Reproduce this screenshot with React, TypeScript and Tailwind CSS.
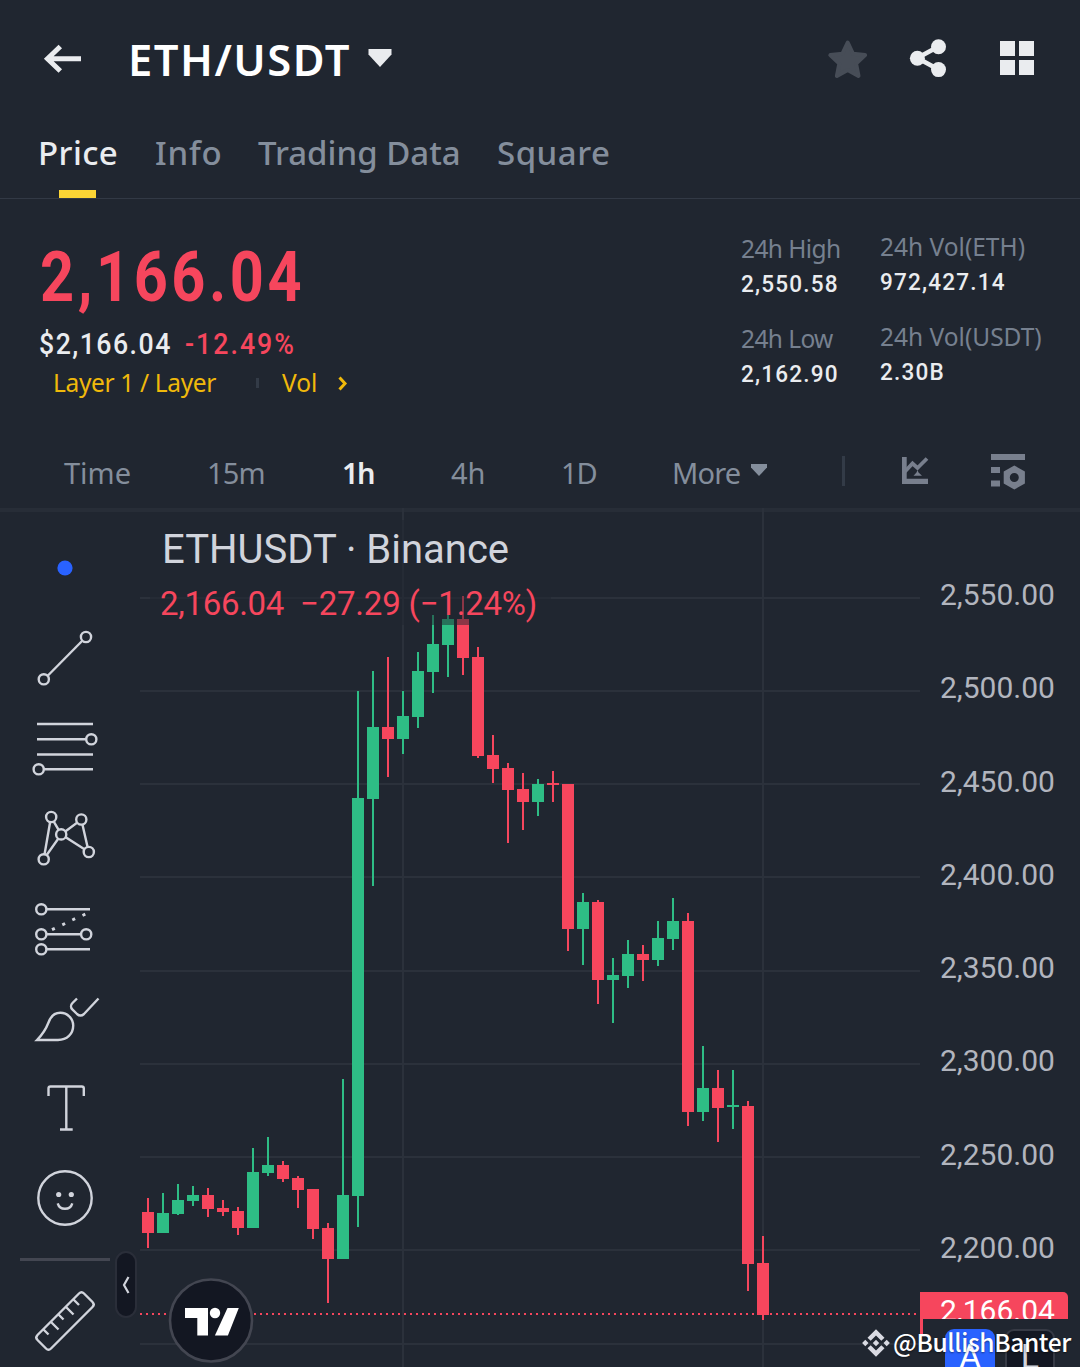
import React from "react";

const UP = "#2ebd85";
const DOWN = "#f6465d";

type Candle = [dir: 1 | 0, high: number, top: number, bottom: number, low: number];

// Candles from left to right: direction, wick top, body top, body bottom, wick bottom.
const candles: Candle[] = [
  [0, 1198, 1212, 1233, 1248],
  [1, 1193, 1213, 1233, 1233],
  [1, 1184, 1200, 1214, 1215],
  [1, 1186, 1195, 1201, 1206],
  [0, 1188, 1195, 1209, 1217],
  [0, 1200, 1208, 1212, 1216],
  [0, 1207, 1211, 1228, 1235],
  [1, 1148, 1172, 1228, 1228],
  [1, 1137, 1165, 1173, 1176],
  [0, 1161, 1165, 1179, 1182],
  [0, 1176, 1178, 1190, 1208],
  [0, 1189, 1189, 1229, 1239],
  [0, 1223, 1228, 1259, 1303],
  [1, 1079, 1195, 1259, 1259],
  [1, 691, 798, 1196, 1227],
  [1, 671, 727, 799, 886],
  [0, 657, 727, 739, 777],
  [1, 691, 716, 739, 754],
  [1, 652, 671, 717, 728],
  [1, 615, 644, 672, 693],
  [1, 612, 619, 645, 677],
  [0, 596, 619, 658, 675],
  [0, 647, 657, 756, 758],
  [0, 735, 755, 769, 783],
  [0, 763, 768, 790, 843],
  [0, 773, 789, 802, 830],
  [1, 779, 784, 802, 816],
  [0, 771, 783, 785, 802],
  [0, 784, 784, 929, 951],
  [1, 893, 902, 929, 965],
  [0, 900, 902, 980, 1004],
  [1, 958, 975, 980, 1023],
  [1, 940, 954, 976, 988],
  [0, 945, 954, 960, 981],
  [1, 921, 938, 960, 966],
  [1, 898, 921, 939, 950],
  [0, 913, 921, 1112, 1126],
  [1, 1046, 1088, 1112, 1121],
  [0, 1070, 1088, 1108, 1142],
  [1, 1070, 1105, 1107, 1129],
  [0, 1101, 1106, 1264, 1291],
  [0, 1236, 1263, 1315, 1320],
];

const gridRows = [597, 690, 783, 876, 970, 1063, 1156, 1249, 1343];
const priceLabels = ["2,550.00", "2,500.00", "2,450.00", "2,400.00", "2,350.00", "2,300.00", "2,250.00", "2,200.00"];

function Header() {
  return (
    <header className="flex h-[117px] items-center">
      <svg className="h-[117px] w-[128px]" viewBox="0 0 128 117" fill="none" stroke="#eaecef" strokeWidth="5">
        <path d="M47 58.7H81M60.3 46.5 47.5 58.7l12.8 12.3" />
      </svg>
      <h1 className="w-[240px] whitespace-nowrap font-['Noto_Sans'] text-[43.5px] leading-[60px] font-semibold tracking-[1.5px] text-white">ETH/USDT</h1>
      <svg className="h-[117px] w-[30px]" viewBox="368 0 30 117" fill="#eaecef">
        <path d="M368.5 49h23v5.5L380 67l-11.5-12.5z" />
      </svg>
      <div className="ml-auto flex">
        <svg className="h-[117px] w-[70px]" viewBox="820 0 70 117" fill="#474d57" stroke="#474d57" strokeWidth="4" strokeLinejoin="round">
          <path d="M847.7 42.5l5.2 11.2 12.2 1.4-9 8.5 2.4 12.4-10.8-6.1-10.8 6.1 2.4-12.4-9-8.5 12.2-1.4z" />
        </svg>
        <svg className="h-[117px] w-[90px]" viewBox="890 0 90 117" fill="#eaecef">
          <path d="M938.5 46.5 917.4 58l21.1 11.5" fill="none" stroke="#eaecef" strokeWidth="4.6" />
          <circle cx="917.4" cy="58.2" r="7.5" />
          <circle cx="938.5" cy="46.7" r="7.5" />
          <circle cx="938.5" cy="69.6" r="7.5" />
        </svg>
        <svg className="h-[117px] w-[100px]" viewBox="980 0 100 117" fill="#eaecef">
          <path d="M1000 41h15v15h-15zM1019 41h15v15h-15zM1000 60h15v15h-15zM1019 60h15v15h-15z" />
        </svg>
      </div>
    </header>
  );
}

function Tabs() {
  return (
    <nav className="flex h-[82px] border-b border-[#323945] pl-[38px] font-['Noto_Sans'] text-[33px] leading-[72px] font-medium whitespace-nowrap text-[#848e9c]">
      <div className="w-[117px] text-[#eaecef]">
        <div className="h-[73px] tracking-[0.4px]">Price</div>
        <div className="ml-[21px] h-[8px] w-[37px] bg-[#fcd535]" />
      </div>
      <div className="w-[103px] tracking-[0.8px]">Info</div>
      <div className="w-[239px]">Trading Data</div>
      <div className="tracking-[0.5px]">Square</div>
    </nav>
  );
}

function Stat({ label, value, narrow = false }: { label: string; value: string; narrow?: boolean }) {
  return (
    <div className="h-[90px] whitespace-nowrap">
      <div className={`h-[36px] font-['Noto_Sans'] text-[24.5px] leading-[38px] text-[#76808f] ${narrow ? "tracking-[-0.6px]" : "tracking-normal"}`}>{label}</div>
      <div className="origin-left scale-x-[0.92] font-['Roboto'] text-[24.5px] leading-[36px] font-medium tracking-[1.3px] text-[#eaecef]">{value}</div>
    </div>
  );
}

function Summary() {
  return (
    <section className="flex h-[232px]">
      <div className="w-[741px] pt-[42px] pl-[39px] whitespace-nowrap">
        <div className="ml-px h-[72px] w-[300px] origin-left scale-x-[0.85] font-['Roboto'] text-[70px] leading-[72px] font-bold tracking-[4.2px] text-[#f6465d]">2,166.04</div>
        <div className="mt-[11px] flex h-[40px] font-['Roboto'] text-[29px] leading-[40px] font-medium">
          <div className="w-[146px] origin-left scale-x-[0.92] tracking-[1.6px] text-[#eaecef]">$2,166.04</div>
          <div className="origin-left scale-x-[0.92] tracking-[2.2px] text-[#f6465d]">-12.49%</div>
        </div>
        <div className="flex h-[38px] items-center pl-[14px] font-['Noto_Sans'] text-[24.5px] leading-[38px] text-[#f0b90b]">
          <div className="w-[203px] tracking-[-0.35px]">Layer 1 / Layer</div>
          <div className="h-[10px] w-[3px] bg-[#333b47]" />
          <div className="ml-[23px] w-[54px]">Vol</div>
          <svg className="h-[16px] w-[12px]" viewBox="0 0 12 16" fill="none" stroke="#f0b90b" strokeWidth="3">
            <path d="M3.5 2.5 9 8.5l-5.500 6" />
          </svg>
        </div>
      </div>
      <div className="w-[139px] pt-[31px]">
        <Stat label="24h High" value="2,550.58" narrow />
        <Stat label="24h Low" value="2,162.90" narrow />
      </div>
      <div className="pt-[29px]">
        <Stat label="24h Vol(ETH)" value="972,427.14" />
        <Stat label="24h Vol(USDT)" value="2.30B" />
      </div>
    </section>
  );
}

function IntervalBar() {
  return (
    <div className="flex h-[81px] items-start border-b-4 border-[#272d37] pl-[64px] font-['Noto_Sans'] text-[29px] whitespace-nowrap text-[#848e9c]">
      <div className="flex h-[81px] items-center">
        <div className="w-[143px] pt-[2px]">Time</div>
        <div className="w-[135px] pt-[2px] tracking-[-0.8px]">15m</div>
        <div className="w-[109px] pt-[2px] font-semibold tracking-[-1.5px] text-[#eaecef]">1h</div>
        <div className="w-[110px] pt-[2px]">4h</div>
        <div className="w-[111px] pt-[2px] tracking-[-1px]">1D</div>
        <div className="w-[79px] pt-[2px] tracking-[-0.8px]">More</div>
        <svg className="h-[81px] w-[80px]" viewBox="751 431 80 81" fill="#848e9c">
          <path d="M751 464h16v3.500l-8 8.500-8-8.500z" />
        </svg>
        <svg className="h-[81px] w-[249px]" viewBox="831 431 249 81" fill="#787f8d">
          <path d="M842 456h3v30h-3z" fill="#333b47" />
          <path d="M902 457h4.700v21.700H928V484h-26z" />
          <path d="M905 471.500l7.500-8 5 4.500 9.500-9.500" fill="none" stroke="#787f8d" strokeWidth="3.800" />
          <path d="M917.500 470l1 2.500 3.500 3.200h-8.500l3-3.200z" />
          <path d="M991 454h34v6h-34zM991 467h9v6h-9zM991 480.500h9v6h-9z" />
          <path fillRule="evenodd" d="M1014.300 465.500l10.600 6v12l-10.600 6-10.600-6v-12zM1014.300 473a4.500 4.500 0 1 0 0 9 4.500 4.500 0 1 0 0-9z" />
        </svg>
      </div>
    </div>
  );
}

function Tool({ top, height, children }: { top: number; height: number; children: React.ReactNode }) {
  return (
    <svg width="140" height={height} viewBox={`0 ${top} 140 ${height}`} className="block shrink-0" fill="none" stroke="#d1d4dc" strokeWidth="2.4">
      {children}
    </svg>
  );
}

function Ring({ x, y }: { x: number; y: number }) {
  return <circle cx={x} cy={y} r="5.1" fill="#202630" />;
}

function Toolbar() {
  return (
    <aside className="relative flex w-[140px] shrink-0 flex-col">
      <Tool top={512} height={100}>
        <circle cx="65" cy="568" r="7.6" fill="#2962ff" stroke="none" />
      </Tool>
      <Tool top={612} height={90}>
        <path d="M44 679.500 86 637" />
        <Ring x={86} y={637} />
        <Ring x={43.800} y={679.300} />
      </Tool>
      <Tool top={702} height={90}>
        <path d="M37 724h56M37 739.300h50M37 754.500h56M42 769.300h51" />
        <Ring x={91.300} y={739.300} />
        <Ring x={38.700} y={769.300} />
      </Tool>
      <Tool top={792} height={90}>
        <path d="M43.700 859.300 51 817l10.300 17.400 20-14.900 7.400 32.500-27.400-17.600z" />
        <Ring x={51.200} y={817} />
        <Ring x={81.300} y={819.500} />
        <Ring x={61.200} y={834.400} />
        <Ring x={43.700} y={859.300} />
        <Ring x={88.800} y={852} />
      </Tool>
      <Tool top={882} height={90}>
        <path d="M42 909.300h48M42 934.300h44M42 949.300h48" />
        <path d="M52 929.700l2.800-1.300M62.300 924.800l2.800-1.300M72.300 920l2.800-1.300M82.500 915.500l2.800-1.300" strokeWidth="3" />
        <Ring x={41.300} y={909.300} />
        <Ring x={41.300} y={934.300} />
        <Ring x={86.200} y={934.300} />
        <Ring x={41.300} y={949.300} />
      </Tool>
      <Tool top={972} height={90}>
        <path d="M37 1040c5-5 9-11 11.500-17.500 2-5.500 6-9.700 11.800-9.700 7.200 0 12.900 5.800 12.900 12.700 0 8.500-6.200 14.500-15.200 14.500z" />
        <path d="M77 998.500l-4.500 4.500c-1.800 1.800-2 4.600-.2 6.400l4.700 4.600c2.200 2 4.800 2 7 0l14.500-15.500" />
      </Tool>
      <Tool top={1062} height={90}>
        <path d="M48.500 1096v-7.500q0-2 2-2h31.300q2 0 2 2v7.500M66.300 1087v42.500M60 1129.500h12.700" />
      </Tool>
      <Tool top={1152} height={90}>
        <circle cx="65" cy="1198" r="26.700" />
        <path d="M57.700 1203.300a7.600 7.600 0 0 0 14.600 0" />
        <circle cx="58.700" cy="1194.500" r="2.600" fill="#d1d4dc" stroke="none" />
        <circle cx="71.300" cy="1194.500" r="2.600" fill="#d1d4dc" stroke="none" />
      </Tool>
      <div className="mt-[16px] ml-[20px] h-[3px] w-[90px] shrink-0 bg-[#434651]" />
      <Tool top={1261} height={106}>
        <path strokeLinejoin="round" d="M79 1293.500q2.500-2.500 5 0l8.500 8.500q2.500 2.500 0 5l-41.500 41.500q-2.500 2.500-5 0l-8.500-8.500q-2.500-2.500 0-5z" />
        <path d="M43.500 1329.500l5 5M51 1322l7.500 7.500M58.500 1314.500l5 5M66 1307l7.500 7.500M73.500 1299.500l5.500 5.500" />
      </Tool>
      <div className="absolute top-[739px] left-[115px] flex h-[67px] w-[22px] items-center justify-center rounded-[11px] border-2 border-[#2a2e39] bg-[#131722]">
        <svg className="h-[20px] w-[10px]" viewBox="0 0 10 20" fill="none" stroke="#d1d4dc" strokeWidth="2.200">
          <path d="M7.500 2 3 10 7.500 18" />
        </svg>
      </div>
    </aside>
  );
}

function Chart() {
  return (
    <svg className="absolute top-[-4px] left-[140px] h-[859px] w-[940px]" viewBox="140 508 940 859">
      {gridRows.map((y) => (
        <rect key={y} x="140" y={y} width="780" height="2" fill="#2b313b" />
      ))}
      <rect x="402" y="508" width="2" height="859" fill="#2b313b" />
      <rect x="762" y="508" width="2" height="859" fill="#2b313b" />
      <path d="M140 1314H920" stroke={DOWN} strokeWidth="2" strokeDasharray="2 4" />
      {candles.map(([dir, high, top, bottom, low], i) => (
        <g key={i} fill={dir ? UP : DOWN}>
          <rect x={147 + i * 15} y={high} width="2" height={low - high} />
          <rect x={142 + i * 15} y={top} width="12" height={bottom - top} />
        </g>
      ))}
      <rect x="150" y="520" width="372" height="62" fill="#202630" fillOpacity="0.5" />
      <rect x="150" y="582" width="401" height="43" fill="#202630" fillOpacity="0.5" />
      <g fontFamily="Roboto, sans-serif" fill="#b2b5be" fontSize="30">
        {priceLabels.map((label, i) => (
          <text key={label} x="940" y={605 + i * 93.250}>{label}</text>
        ))}
      </g>
      <circle cx="211" cy="1320.500" r="41" fill="#131722" stroke="#434651" strokeWidth="2.600" />
      <g fill="#fff">
        <path d="M185 1308h23v27.600h-10.700v-17.600H185z" />
        <circle cx="215" cy="1313" r="5.200" />
        <path d="M227.500 1308h11.300l-10.900 27.600h-13z" />
      </g>
    </svg>
  );
}

function ChartArea() {
  return (
    <section className="relative flex h-[855px]">
      <Toolbar />
      <Chart />
      <div className="relative flex flex-1 flex-col pl-[22px] font-['Roboto'] whitespace-nowrap">
        <div className="mt-[13px] h-[50px] text-[40px] leading-[50px] text-[#d1d4dc]">ETHUSDT · Binance</div>
        <div className="mt-[6px] flex h-[46px] text-[33px] leading-[46px] text-[#f6465d]">
          <span className="-ml-[2px] w-[140px] tracking-[-0.3px]">2,166.04</span>
          <span className="tracking-[-0.2px]">−27.29 (−1.24%)</span>
        </div>
      </div>
      <div className="absolute top-[780px] left-[920px] h-[42px] w-[148px] overflow-hidden rounded-tr-[5px] bg-[#f6465d] pl-[20px] font-['Roboto'] text-[30px] leading-[38px] text-white">2,166.04</div>
      <div className="absolute top-[807px] left-[923px] flex h-[48px] w-[157px] gap-[10px] overflow-hidden bg-[#202630] pt-[10px] pl-[22px] text-center font-['Roboto'] text-[34px] leading-[54px]">
        <div className="h-[50px] w-[50px] rounded-[9px] bg-[#2962ff] text-white">A</div>
        <div className="h-[50px] w-[50px] rounded-[9px] border-2 border-[#363a45] bg-[#131722] leading-[50px] text-[#d1d4dc]">L</div>
      </div>
      <div className="absolute top-[813px] left-[862px] flex h-[36px] items-center gap-[3px] whitespace-nowrap">
        <svg className="h-[28px] w-[28px]" viewBox="-14 -14 28 28" fill="#d9dae2">
          <path d="M0-13.800 8.500-5.300 5.300-2.200 0-7.500-5.300-2.200-8.500-5.300zM0 13.800 8.500 5.300 5.300 2.200 0 7.500-5.300 2.200-8.500 5.300zM-10.700-3.200-7.500 0l-3.200 3.200L-13.900 0zM10.700-3.200 13.900 0l-3.200 3.200L7.500 0zM0-3.200 3.200 0 0 3.200-3.200 0z" />
        </svg>
        <span className="-mt-[2px] font-['Noto_Sans_CJK_SC'] text-[24.500px] leading-[36px] font-medium tracking-[-0.350px] text-white [text-shadow:0_1px_2px_rgba(0,0,0,0.45)]">@BullishBanter</span>
      </div>
    </section>
  );
}

export default function App() {
  return (
    <main className="flex h-[1367px] w-[1080px] flex-col overflow-hidden bg-[#202630]">
      <Header />
      <Tabs />
      <Summary />
      <IntervalBar />
      <ChartArea />
    </main>
  );
}
